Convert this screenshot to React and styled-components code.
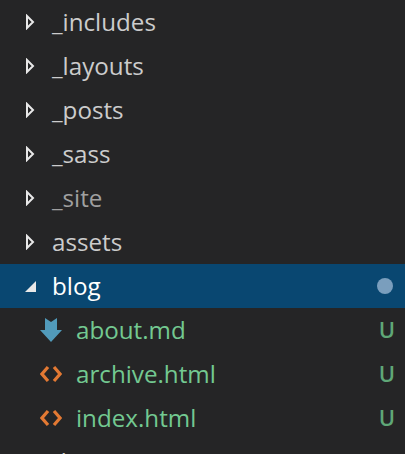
import React from "react";
import styled, { createGlobalStyle } from "styled-components";

const GlobalStyle = createGlobalStyle`
  html, body {
    margin: 0;
    padding: 0;
    background: #252526;
  }
`;

const Tree = styled.div`
  width: 405px;
  height: 454px;
  overflow: hidden;
  background: #252526;
  font-family: "Open Sans", "Noto Sans", sans-serif;
  font-size: 24.2px;
`;

const Row = styled.div`
  display: flex;
  align-items: center;
  height: 44px;
  padding-left: ${(p) => (p.$file ? "40px" : "25px")};
  padding-right: 10px;
  background: ${(p) => (p.$selected ? "#094771" : "transparent")};
`;

const Twistie = styled.svg`
  width: 12px;
  height: 16px;
  margin-right: 15px;
  flex-shrink: 0;
`;

const FileIcon = styled.svg`
  width: 22px;
  height: 24px;
  margin-right: 14px;
  flex-shrink: 0;
`;

const Label = styled.span`
  flex: 1;
  padding-bottom: 2px;
  color: ${(p) => p.$color};
  white-space: nowrap;
`;

const Dot = styled.span`
  width: 16px;
  height: 16px;
  margin-right: 2px;
  border-radius: 50%;
  background: #7a9ebd;
`;

const Badge = styled.span`
  padding-bottom: 2px;
  color: #5fa777;
  font-size: 22px;
  font-weight: 600;
`;

const ClosedArrow = () => (
  <Twistie viewBox="0 0 12 16">
    <path d="M2 2 L8 8 L2 14 Z" fill="none" stroke="#e8e8e8" strokeWidth="2" />
  </Twistie>
);

const OpenArrow = () => (
  <Twistie viewBox="0 0 12 16">
    <path d="M0 14 L11 14 L11 3 Z" fill="#e8e8e8" />
  </Twistie>
);

const MarkdownIcon = () => (
  <FileIcon viewBox="0 0 22 24">
    <path d="M5 0 L11 4 L17 0 V12 H22 L11 24 L0 12 H5 Z" fill="#519aba" />
  </FileIcon>
);

const HtmlIcon = () => (
  <FileIcon viewBox="0 0 22 24">
    <path d="M8 5 L2 12 L8 19 M14 5 L20 12 L14 19" fill="none" stroke="#e37933" strokeWidth="3.2" />
  </FileIcon>
);

const folders = [
  { name: "_includes", color: "#cccccc" },
  { name: "_layouts", color: "#cccccc" },
  { name: "_posts", color: "#cccccc" },
  { name: "_sass", color: "#cccccc" },
  { name: "_site", color: "#a0a0a0" },
  { name: "assets", color: "#cccccc" },
];

const files = [
  { name: "about.md", Icon: MarkdownIcon },
  { name: "archive.html", Icon: HtmlIcon },
  { name: "index.html", Icon: HtmlIcon },
];

const App = () => (
  <Tree>
    <GlobalStyle />
    {folders.map((f) => (
      <Row key={f.name}>
        <ClosedArrow />
        <Label $color={f.color}>{f.name}</Label>
      </Row>
    ))}
    <Row $selected>
      <OpenArrow />
      <Label $color="#ffffff">blog</Label>
      <Dot />
    </Row>
    {files.map((f) => (
      <Row $file key={f.name}>
        <f.Icon />
        <Label $color="#73c991">{f.name}</Label>
        <Badge>U</Badge>
      </Row>
    ))}
    <Row>
      <ClosedArrow />
      <Label $color="#cccccc">docs</Label>
    </Row>
  </Tree>
);

export default App;
